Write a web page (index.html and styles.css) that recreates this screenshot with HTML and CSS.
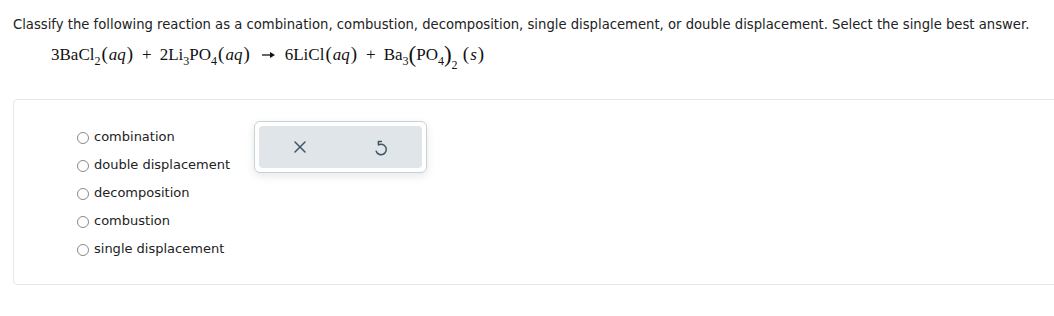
FILE: index.html
```html
<!DOCTYPE html>
<html>
<head>
<meta charset="utf-8">
<link rel="stylesheet" href="styles.css">
</head>
<body>
<div class="page">
  <p class="prompt">Classify the following reaction as a combination, combustion, decomposition, single displacement, or double displacement. Select the single best answer.</p>
  <div class="eq">
    <span>3BaCl<sub>2</sub><span class="paren">(</span><i>aq</i><span class="paren">)</span></span>
    <span class="op">+</span>
    <span>2Li<sub>3</sub>PO<sub>4</sub><span class="paren">(</span><i>aq</i><span class="paren">)</span></span>
    <span class="arrow"><svg width="14" height="8" viewBox="0 0 14 8"><path d="M0 4H10" stroke="#111" stroke-width="1.3"/><path d="M8 1L13 4L8 7Z" fill="#111"/></svg></span>
    <span>6LiCl<span class="paren">(</span><i>aq</i><span class="paren">)</span></span>
    <span class="op">+</span>
    <span>Ba<sub>3</sub><span class="bigp">(</span>PO<sub>4</sub><span class="bigp">)</span><sub class="low">2</sub> <span class="paren">(</span><i>s</i><span class="paren">)</span></span>
  </div>
  <div class="panel">
    <ul class="options">
      <li><span class="radio"></span>combination</li>
      <li><span class="radio"></span>double displacement</li>
      <li><span class="radio"></span>decomposition</li>
      <li><span class="radio"></span>combustion</li>
      <li><span class="radio"></span>single displacement</li>
    </ul>
    <div class="tools">
      <div class="tools-inner">
        <button class="tool" aria-label="clear">
          <svg width="14" height="14" viewBox="0 0 14 14"><path d="M2 2L12 12M12 2L2 12" stroke="#3e5661" stroke-width="1.5" stroke-linecap="round"/></svg>
        </button>
        <button class="tool" aria-label="undo">
          <svg width="14" height="17" viewBox="0 0 14 17"><path d="M4.6 5.9A5.2 5.2 0 1 1 2.2 12.2" fill="none" stroke="#3e5661" stroke-width="1.5" stroke-linecap="round"/><path d="M7.4 2.4H4.4V5.6" fill="none" stroke="#3e5661" stroke-width="1.5" stroke-linecap="round" stroke-linejoin="round"/></svg>
        </button>
      </div>
    </div>
  </div>
</div>
</body>
</html>
```

FILE: styles.css
```css
html, body {
  margin: 0;
  padding: 0;
  background: #fff;
}
.page {
  padding: 12px 13px 0 13px;
  font-family: "DejaVu Sans", Verdana, sans-serif;
  color: #222;
}
.prompt {
  margin: 0;
  font-size: 13.2px;
  line-height: 28px;
  margin-top: -1px;
  white-space: nowrap;
}
.eq {
  margin: 4px 0 0 38px;
  font-family: "Liberation Serif", "Times New Roman", serif;
  font-size: 17px;
  color: #111;
  height: 39px;
  display: flex;
  align-items: baseline;
  white-space: nowrap;
}
.eq sub {
  font-size: 12px;
  vertical-align: -5px;
  line-height: 0;
}
.eq sub.low {
  vertical-align: -9px;
}
.eq i {
  font-style: italic;
}
.paren {
  font-size: 19px;
  padding: 0 1px;
}
.bigp {
  font-size: 23px;
  vertical-align: -2px;
  line-height: 0;
}
.op {
  margin: 0 8px;
}
.arrow {
  margin: 0 9px 0 11px;
}
.arrow svg {
  vertical-align: 1px;
}
.panel {
  margin-top: 17px;
  margin-right: -40px;
  border: 1px solid #e3e7e9;
  border-radius: 4px;
  height: 184px;
  display: flex;
  align-items: flex-start;
}
.options {
  list-style: none;
  margin: 0;
  padding: 23px 0 0 63px;
}
.options li {
  font-size: 13px;
  line-height: 28px;
  height: 28px;
  display: flex;
  align-items: center;
  white-space: nowrap;
}
.radio {
  width: 10px;
  height: 10px;
  border: 1px solid #8a8a8a;
  border-radius: 50%;
  margin-right: 5px;
  flex: none;
  position: relative;
  top: 1px;
}
.tools {
  margin: 21px 0 0 24px;
  padding: 4px;
  border: 1px solid #c9d1d5;
  border-radius: 6px;
  box-shadow: 0 3px 8px rgba(40, 60, 70, 0.12);
  background: #fff;
}
.tools-inner {
  width: 163px;
  height: 42px;
  background: #dfe5e8;
  border-radius: 4px;
  display: flex;
}
.tool {
  flex: 1;
  border: 0;
  background: transparent;
  padding: 0;
  display: flex;
  align-items: center;
  justify-content: center;
}
```
